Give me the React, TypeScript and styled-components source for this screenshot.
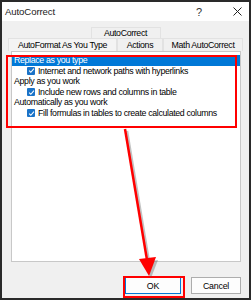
import React from "react";
import styled, { createGlobalStyle } from "styled-components";

const Global = createGlobalStyle`
  html, body { margin: 0; padding: 0; background: #ffffff; }
  body { font-family: "Liberation Sans", Arial, sans-serif; }
  * { box-sizing: border-box; }
`;

const Window = styled.div`
  position: relative;
  width: 251px;
  height: 300px;
  border: 2px solid #2a2a2a;
  background: #f0f0f0;
  display: flex;
  flex-direction: column;
  color: #000;
  font-size: 8.8px;
  letter-spacing: -0.34px;
  overflow: hidden;
`;

const TitleBar = styled.div`
  height: 19px;
  background: #ffffff;
  display: flex;
  align-items: center;
  padding-left: 3px;
  font-size: 9.6px;
  letter-spacing: -0.1px;
  color: #1a1a1a;
`;

const TitleText = styled.span`
  flex: 1;
`;

const HelpButton = styled.span`
  width: 14px;
  text-align: center;
  font-size: 11px;
  color: #333;
  margin-right: 19px;
`;

const CloseButton = styled.span`
  width: 24px;
  display: flex;
  justify-content: center;
  align-items: center;
`;

const TabArea = styled.div`
  padding-top: 6px;
  display: flex;
  flex-direction: column;
`;

const TabRow = styled.div<{ $center?: boolean }>`
  display: flex;
  justify-content: ${(p) => (p.$center ? "center" : "flex-start")};
  padding: 0 6px;
`;

const Tab = styled.div<{ $w: number; $h: number; $active?: boolean }>`
  width: ${(p) => p.$w}px;
  height: ${(p) => p.$h}px;
  display: flex;
  align-items: center;
  justify-content: center;
  border: 1px solid #e2e2e2;
  border-bottom: none;
  background: ${(p) => (p.$active ? "#f4f4f4" : "#f0f0f0")};
  white-space: nowrap;
`;

const ListBox = styled.div`
  margin: 0 8px 0 9px;
  height: 211px;
  background: #ffffff;
  border: 1px solid #c8c8c8;
  display: flex;
  flex-direction: column;
  padding-top: 3px;
`;

const HeaderRow = styled.div<{ $selected?: boolean }>`
  height: 10.6px;
  line-height: 10.6px;
  padding-left: 2px;
  background: ${(p) => (p.$selected ? "#0078d7" : "transparent")};
  color: ${(p) => (p.$selected ? "#ffffff" : "#000")};
  white-space: nowrap;
`;

const OptionRow = styled.div`
  height: 10.6px;
  display: flex;
  align-items: center;
  padding-left: 15px;
  gap: 3px;
  white-space: nowrap;
`;

const Check = styled.span`
  width: 8px;
  height: 8px;
  border-radius: 1px;
  background: #1a73c8;
  display: flex;
  align-items: center;
  justify-content: center;
  flex: none;
`;

const Footer = styled.div`
  flex: 1;
  display: flex;
  justify-content: flex-end;
  align-items: flex-start;
  padding: 15px 8px 0 0;
  gap: 10px;
`;

const Button = styled.button<{ $w: number; $focused?: boolean }>`
  width: ${(p) => p.$w}px;
  height: 17px;
  font-family: inherit;
  font-size: 8.8px;
  letter-spacing: -0.2px;
  padding: 0;
  background: #fdfdfd;
  border: 1px solid ${(p) => (p.$focused ? "#0078d7" : "#adadad")};
  color: #000;
`;

const Annotation = styled.div<{ $l: number; $t: number; $w: number; $h: number }>`
  position: absolute;
  left: ${(p) => p.$l}px;
  top: ${(p) => p.$t}px;
  width: ${(p) => p.$w}px;
  height: ${(p) => p.$h}px;
  border: 2px solid #ff0000;
  pointer-events: none;
`;

const Overlay = styled.svg`
  position: absolute;
  left: -2px;
  top: -2px;
  width: 251px;
  height: 300px;
  pointer-events: none;
`;

const CheckMark = () => (
  <svg width="7" height="7" viewBox="0 0 8 8">
    <path d="M1.3 4.2 L3.2 6 L6.8 1.8" fill="none" stroke="#fff" strokeWidth="1.2" />
  </svg>
);

const Option = ({ label }: { label: string }) => (
  <OptionRow>
    <Check>
      <CheckMark />
    </Check>
    <span>{label}</span>
  </OptionRow>
);

export default function App() {
  return (
    <>
      <Global />
      <Window>
        <TitleBar>
          <TitleText>AutoCorrect</TitleText>
          <HelpButton>?</HelpButton>
          <CloseButton>
            <svg width="9" height="9" viewBox="0 0 9 9">
              <path d="M0.5 0.5 L8.5 8.5 M8.5 0.5 L0.5 8.5" stroke="#222" strokeWidth="1" fill="none" />
            </svg>
          </CloseButton>
        </TitleBar>
        <TabArea>
          <TabRow $center>
            <Tab $w={70} $h={11}>AutoCorrect</Tab>
          </TabRow>
          <TabRow>
            <Tab $w={109} $h={13} $active>AutoFormat As You Type</Tab>
            <Tab $w={46} $h={13}>Actions</Tab>
            <Tab $w={80} $h={13}>Math AutoCorrect</Tab>
          </TabRow>
        </TabArea>
        <ListBox>
          <HeaderRow $selected>Replace as you type</HeaderRow>
          <Option label="Internet and network paths with hyperlinks" />
          <HeaderRow>Apply as you work</HeaderRow>
          <Option label="Include new rows and columns in table" />
          <HeaderRow>Automatically as you work</HeaderRow>
          <Option label="Fill formulas in tables to create calculated columns" />
        </ListBox>
        <Footer>
          <Button $w={56} $focused>OK</Button>
          <Button $w={50}>Cancel</Button>
        </Footer>
        <Annotation $l={4} $t={53} $w={231} $h={73} />
        <Annotation $l={121} $t={274} $w={62} $h={22} />
        <Overlay viewBox="0 0 251 300">
          <g opacity="0.35" fill="#555" stroke="#555">
            <line x1="127" y1="131" x2="149" y2="262" strokeWidth="2.5" />
            <polygon points="141,262 158,260 151,278" stroke="none" />
          </g>
          <g fill="#ff0000" stroke="#ff0000">
            <line x1="125" y1="129" x2="147" y2="260" strokeWidth="2.5" />
            <polygon points="139,259 156,257 149,276" stroke="none" />
          </g>
        </Overlay>
      </Window>
    </>
  );
}
